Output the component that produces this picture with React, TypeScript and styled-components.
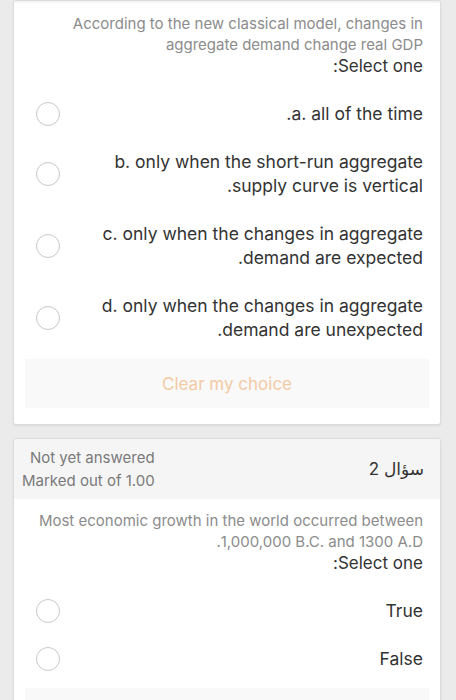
import React from "react";
import styled, { createGlobalStyle } from "styled-components";

const GlobalStyle = createGlobalStyle`
  html, body {
    margin: 0;
    padding: 0;
    background: #ebebeb;
  }
  body {
    font-family: Inter, "Noto Sans", "DejaVu Sans", sans-serif;
    -webkit-font-smoothing: antialiased;
  }
`;

const Page = styled.div`
  width: 456px;
  height: 700px;
  overflow: hidden;
  padding: 0 15px 0 13px;
  box-sizing: border-box;
  display: flex;
  flex-direction: column;
  gap: 13px;
`;

const Card = styled.div`
  background: #fff;
  border: 1px solid #dcdcdc;
  border-radius: 3px;
  box-shadow: 0 1px 2px rgba(0, 0, 0, 0.08);
  box-sizing: border-box;
  flex-shrink: 0;
  overflow: hidden;
`;

const TopStrip = styled.div`
  height: 2px;
  background: #f4f4f4;
`;

const Header = styled.div`
  direction: rtl;
  background: #f5f5f5;
  height: 60px;
  display: flex;
  align-items: center;
  justify-content: space-between;
  padding: 0 16px 0 8px;
`;

const Title = styled.div`
  font-size: 17px;
  color: #333;
  font-family: Inter, "DejaVu Sans", "Noto Sans", sans-serif;
`;

const Info = styled.div`
  font-size: 15px;
  line-height: 23px;
  color: #7a7a7a;
  text-align: right;
`;

const Body = styled.div<{ $top: number }>`
  direction: rtl;
  padding: ${(p) => p.$top}px 11px 16px;
`;

const Question = styled.div`
  font-size: 15px;
  line-height: 21px;
  color: #8c8c8c;
  padding: 0 6px 0 0;
`;

const Prompt = styled.div`
  font-size: 17px;
  line-height: 22px;
  color: #333;
  padding-right: 6px;
  margin-bottom: 13px;
`;

const Option = styled.label`
  display: flex;
  align-items: center;
  padding: 12px 6px 12px 11px;
  gap: 18px;
`;

const OptionText = styled.div`
  flex: 1;
  font-size: 17.5px;
  line-height: 24px;
  color: #333;
  padding-left: 10px;
`;

const Radio = styled.span`
  width: 22px;
  height: 22px;
  border-radius: 50%;
  border: 1px solid #c8c8c8;
  background: #fff;
  flex-shrink: 0;
`;

const ClearButton = styled.div`
  margin-top: 5px;
  height: 49px;
  background: #f9f9f9;
  display: flex;
  align-items: center;
  justify-content: center;
  font-size: 17px;
  color: #f3cba5;
`;

const q1Options = [
  "a. all of the time.",
  "b. only when the short-run aggregate supply curve is vertical.",
  "c. only when the changes in aggregate demand are expected.",
  "d. only when the changes in aggregate demand are unexpected.",
];

const q2Options = ["True", "False"];

export default function App() {
  return (
    <>
      <GlobalStyle />
      <Page>
        <Card>
          <TopStrip />
          <Body $top={10}>
            <Question>
              According to the new classical model, changes in aggregate demand
              change real GDP
            </Question>
            <Prompt>Select one:</Prompt>
            {q1Options.map((o) => (
              <Option key={o}>
                <OptionText>{o}</OptionText>
                <Radio />
              </Option>
            ))}
            <ClearButton>Clear my choice</ClearButton>
          </Body>
        </Card>
        <Card>
          <Header>
            <Title>سؤال 2</Title>
            <Info>
              Not yet answered
              <br />
              Marked out of 1.00
            </Info>
          </Header>
          <Body $top={11}>
            <Question>
              Most economic growth in the world occurred between 1,000,000 B.C.
              and 1300 A.D.
            </Question>
            <Prompt>Select one:</Prompt>
            {q2Options.map((o) => (
              <Option key={o}>
                <OptionText>{o}</OptionText>
                <Radio />
              </Option>
            ))}
            <ClearButton>Clear my choice</ClearButton>
          </Body>
        </Card>
      </Page>
    </>
  );
}
